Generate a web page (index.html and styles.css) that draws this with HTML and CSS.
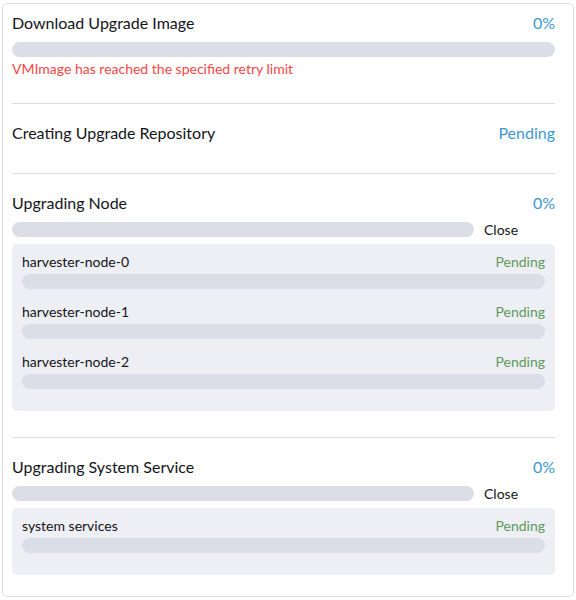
FILE: index.html
```html
<!DOCTYPE html>
<html lang="en">
<head>
<meta charset="utf-8">
<title>Upgrade progress</title>
<link rel="stylesheet" href="styles.css">
</head>
<body>
<div class="popover">
  <section class="step step--first">
    <div class="step-head">
      <span class="step-title">Download Upgrade Image</span>
      <span class="step-status step-status--info">0%</span>
    </div>
    <div class="bar bar--full"></div>
    <div class="step-error">VMImage has reached the specified retry limit</div>
  </section>
  <hr class="divider">
  <section class="step step--plain">
    <div class="step-head">
      <span class="step-title">Creating Upgrade Repository</span>
      <span class="step-status step-status--info">Pending</span>
    </div>
  </section>
  <hr class="divider">
  <section class="step">
    <div class="step-head">
      <span class="step-title">Upgrading Node</span>
      <span class="step-status step-status--info">0%</span>
    </div>
    <div class="bar-row">
      <div class="bar bar--grow"></div>
      <span class="toggle">Close</span>
    </div>
    <div class="sub-box">
      <div class="sub-item">
        <div class="sub-head"><span>harvester-node-0</span><span class="sub-status">Pending</span></div>
        <div class="bar"></div>
      </div>
      <div class="sub-item">
        <div class="sub-head"><span>harvester-node-1</span><span class="sub-status">Pending</span></div>
        <div class="bar"></div>
      </div>
      <div class="sub-item">
        <div class="sub-head"><span>harvester-node-2</span><span class="sub-status">Pending</span></div>
        <div class="bar"></div>
      </div>
    </div>
  </section>
  <hr class="divider">
  <section class="step step--last">
    <div class="step-head">
      <span class="step-title">Upgrading System Service</span>
      <span class="step-status step-status--info">0%</span>
    </div>
    <div class="bar-row">
      <div class="bar bar--grow"></div>
      <span class="toggle">Close</span>
    </div>
    <div class="sub-box">
      <div class="sub-item">
        <div class="sub-head"><span>system services</span><span class="sub-status">Pending</span></div>
        <div class="bar"></div>
      </div>
    </div>
  </section>
</div>
</body>
</html>
```

FILE: styles.css
```css
html, body {
  margin: 0;
  padding: 0;
  background: #ffffff;
}

body {
  font-family: Lato, "Noto Sans", "Liberation Sans", sans-serif;
  color: #141419;
  padding: 3px 0 0 2px;
  height: 600px;
  box-sizing: border-box;
  overflow: hidden;
}

.popover {
  width: 572px;
  height: 594px;
  box-sizing: border-box;
  border: 1px solid #dcdee7;
  border-radius: 5px;
  background: #ffffff;
  padding: 9px 18px 0 9px;
  display: flex;
  flex-direction: column;
}

.step {
  display: flex;
  flex-direction: column;
  padding: 19px 0 26px;
}

.step--first {
  padding-top: 0;
  padding-bottom: 24px;
}

.step--plain {
  padding-bottom: 30px;
}

.step--last {
  padding-bottom: 0;
}

.divider {
  margin: 0;
  border: 0;
  height: 1px;
  background: #dcdee7;
  flex: none;
}

.step-head {
  display: flex;
  justify-content: space-between;
  align-items: center;
  font-size: 16px;
  line-height: 20px;
}

.step-status--info {
  color: #3d98d3;
}

.bar {
  height: 15px;
  border-radius: 8px;
  background: #dcdee7;
  flex: none;
}

.bar--grow {
  flex: 1 1 auto;
}

.step > .bar--full {
  margin-top: 9px;
}

.step-error {
  margin-top: 2px;
  font-size: 14px;
  line-height: 20px;
  color: #f64747;
}

.bar-row {
  display: flex;
  align-items: center;
  gap: 10px;
  margin-top: 9px;
}

.toggle {
  width: 71px;
  font-size: 14px;
  line-height: 15px;
  color: #141419;
}

.sub-box {
  margin-top: 7px;
  background: #eeeff4;
  border-radius: 5px;
  padding: 8px 10px 9px;
  display: flex;
  flex-direction: column;
  gap: 13px;
}

.sub-item {
  display: flex;
  flex-direction: column;
  gap: 2px;
}

.sub-item:last-child {
  margin-bottom: 13px;
}

.sub-head {
  display: flex;
  justify-content: space-between;
  font-size: 14px;
  line-height: 20px;
}

.sub-status {
  color: #5d995d;
}
```
